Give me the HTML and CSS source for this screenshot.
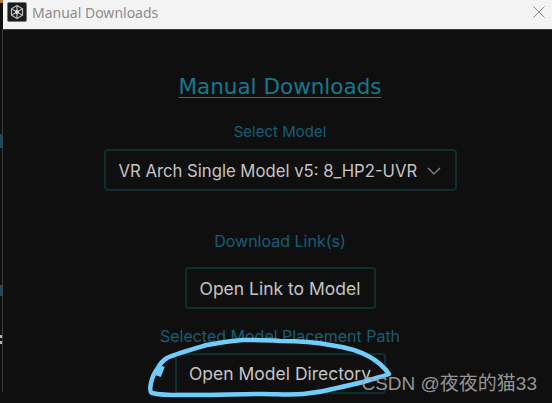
FILE: index.html
```html
<!DOCTYPE html>
<html lang="zh">
<head>
<meta charset="utf-8">
<title>Manual Downloads</title>
<link rel="stylesheet" href="styles.css">
</head>
<body>
<svg class="edge" viewBox="0 0 3 403" width="3" height="403" aria-hidden="true">
  <path d="M0 0H3V3H0Z" fill="#b8792e"/>
  <path d="M0 3H3V29H0Z" fill="#101010"/>
  <path d="M0 134H2V148H0ZM0 285H2V296H0Z" fill="#12506a"/>
  <path d="M0 335H3V338H0ZM0 341H3V344H0Z" fill="#b5b5b5"/>
  <path d="M2.500 29V392" stroke="#3c3c3c" fill="none"/>
</svg>
<div class="window">
  <header class="titlebar">
    <svg class="app-icon" viewBox="0 0 20 20" width="20" height="20" aria-hidden="true">
      <rect x="0.500" y="0.500" width="19" height="19" rx="1.500" fill="#1a1c1e" stroke="#77797b"/>
      <g fill="none" stroke="#b4b6b8" stroke-width="1.300">
        <path d="M10 3.500 15.500 6.800V13.200L10 16.500 4.500 13.200V6.800Z"/>
        <path d="M10 3.500V16.500M4.500 6.800 15.500 13.200M15.500 6.800 4.500 13.200"/>
      </g>
      <circle cx="10" cy="10" r="2" fill="#d8dadc"/>
    </svg>
    <span class="title">Manual Downloads</span>
    <svg class="close" viewBox="0 0 12 12" width="12" height="12" aria-hidden="true">
      <path d="M0.500 0.500 11.500 11.500M11.500 0.500 0.500 11.500" stroke="#8b8b8b" stroke-width="1" fill="none"/>
    </svg>
  </header>
  <main class="content">
    <h1 class="heading">Manual Downloads</h1>
    <p class="label label-model">Select Model</p>
    <div class="select">
      <span>VR Arch Single Model v5: 8_HP2-UVR</span>
      <svg class="chevron" viewBox="0 0 14 8" width="14" height="8" aria-hidden="true">
        <path d="M1 1 7 7 13 1" stroke="#8d8d8d" stroke-width="1.200" fill="none"/>
      </svg>
    </div>
    <p class="label label-link">Download Link(s)</p>
    <button class="btn btn-link">Open Link to Model</button>
    <p class="label label-path">Selected Model Placement Path</p>
    <button class="btn btn-dir">Open Model Directory</button>
  </main>
</div>
<svg class="scribble" viewBox="0 0 552 403" width="552" height="403" aria-hidden="true">
  <path d="M389 374C384 367 377 361 370 357C358 350 345 347 330 345C315 342 298 341 280 341C265 340 255 340 243 340C230 341 218 343 207 345C193 349 178 353 167 358C162 361 160 364 158 368C154 373 152 378 151 383C150 388 150 392 152 393C165 396 180 395 197 395C220 395 240 394 263 394C277 394 290 395 303 394C315 393 326 391 337 388C346 386 355 384 363 382C372 379 381 377 389 374Z" fill="none" stroke="#70cdfb" stroke-width="4.500" stroke-linejoin="round"/>
  <path d="M158 376 162 366" stroke="#70cdfb" stroke-width="6" fill="none"/>
</svg>
<div class="watermark">CSDN @夜夜的猫33</div>
</body>
</html>
```
FILE: styles.css
```css
* { box-sizing: border-box; }
html, body {
  margin: 0;
  width: 552px;
  height: 403px;
  overflow: hidden;
  background: #0f0f0f;
}
body {
  position: relative;
  display: flex;
  font-family: "Inter", "Liberation Sans", sans-serif;
}
.edge {
  flex: none;
  display: block;
}
.window {
  flex: 1;
  display: flex;
  flex-direction: column;
  min-width: 0;
}
.titlebar {
  height: 30px;
  flex: none;
  background: #f3f3f3;
  display: flex;
  align-items: center;
  padding: 0 7px 5px 4px;
  border-bottom: 1px solid #3a3a3a;
}
.app-icon { flex: none; }
.title {
  margin-left: 5px;
  font: 14px "Noto Sans", "Open Sans", sans-serif;
  color: #8c8c8c;
}
.close { margin-left: auto; }
.content {
  flex: 1;
  background: #0f0f0f;
  display: flex;
  flex-direction: column;
  align-items: center;
  padding: 44px 0 0 5px;
}
.heading {
  margin: 0;
  font: 400 21.500px/26px "DejaVu Sans", sans-serif;
  color: #14788f;
  text-decoration: underline;
  text-decoration-thickness: 1px;
  text-underline-offset: 3px;
}
.label {
  margin: 0;
  font-size: 16px;
  line-height: 18px;
  color: #125f78;
}
.label-model { margin-top: 23px; font-size: 15px; }
.label-link { margin-top: 41px; }
.label-path { margin-top: 18px; }
.select {
  margin-top: 8px;
  width: 353px;
  height: 42px;
  border: 2px solid #0e2f2f;
  border-radius: 4px;
  display: flex;
  align-items: center;
  padding: 1px 14px 0 13px;
  justify-content: space-between;
  font-size: 16.700px;
  color: #c4c4c4;
  white-space: nowrap;
}
.btn {
  display: block;
  background: transparent;
  border: 2px solid #0e2f2f;
  border-radius: 3px;
  padding: 0;
  font-family: inherit;
  font-size: 17.500px;
  color: #c4c4c4;
}
.btn-link { margin-top: 17px; width: 191px; height: 42px; }
.btn-dir { margin-top: 8px; width: 211px; height: 41px; }
.scribble {
  position: absolute;
  left: 0;
  top: 0;
  pointer-events: none;
}
.watermark {
  position: absolute;
  right: 15px;
  top: 372px;
  font: 19px/24px "Liberation Sans", "Noto Sans CJK SC", sans-serif;
  color: #a3a3a3;
  opacity: 0.9;
}
```
